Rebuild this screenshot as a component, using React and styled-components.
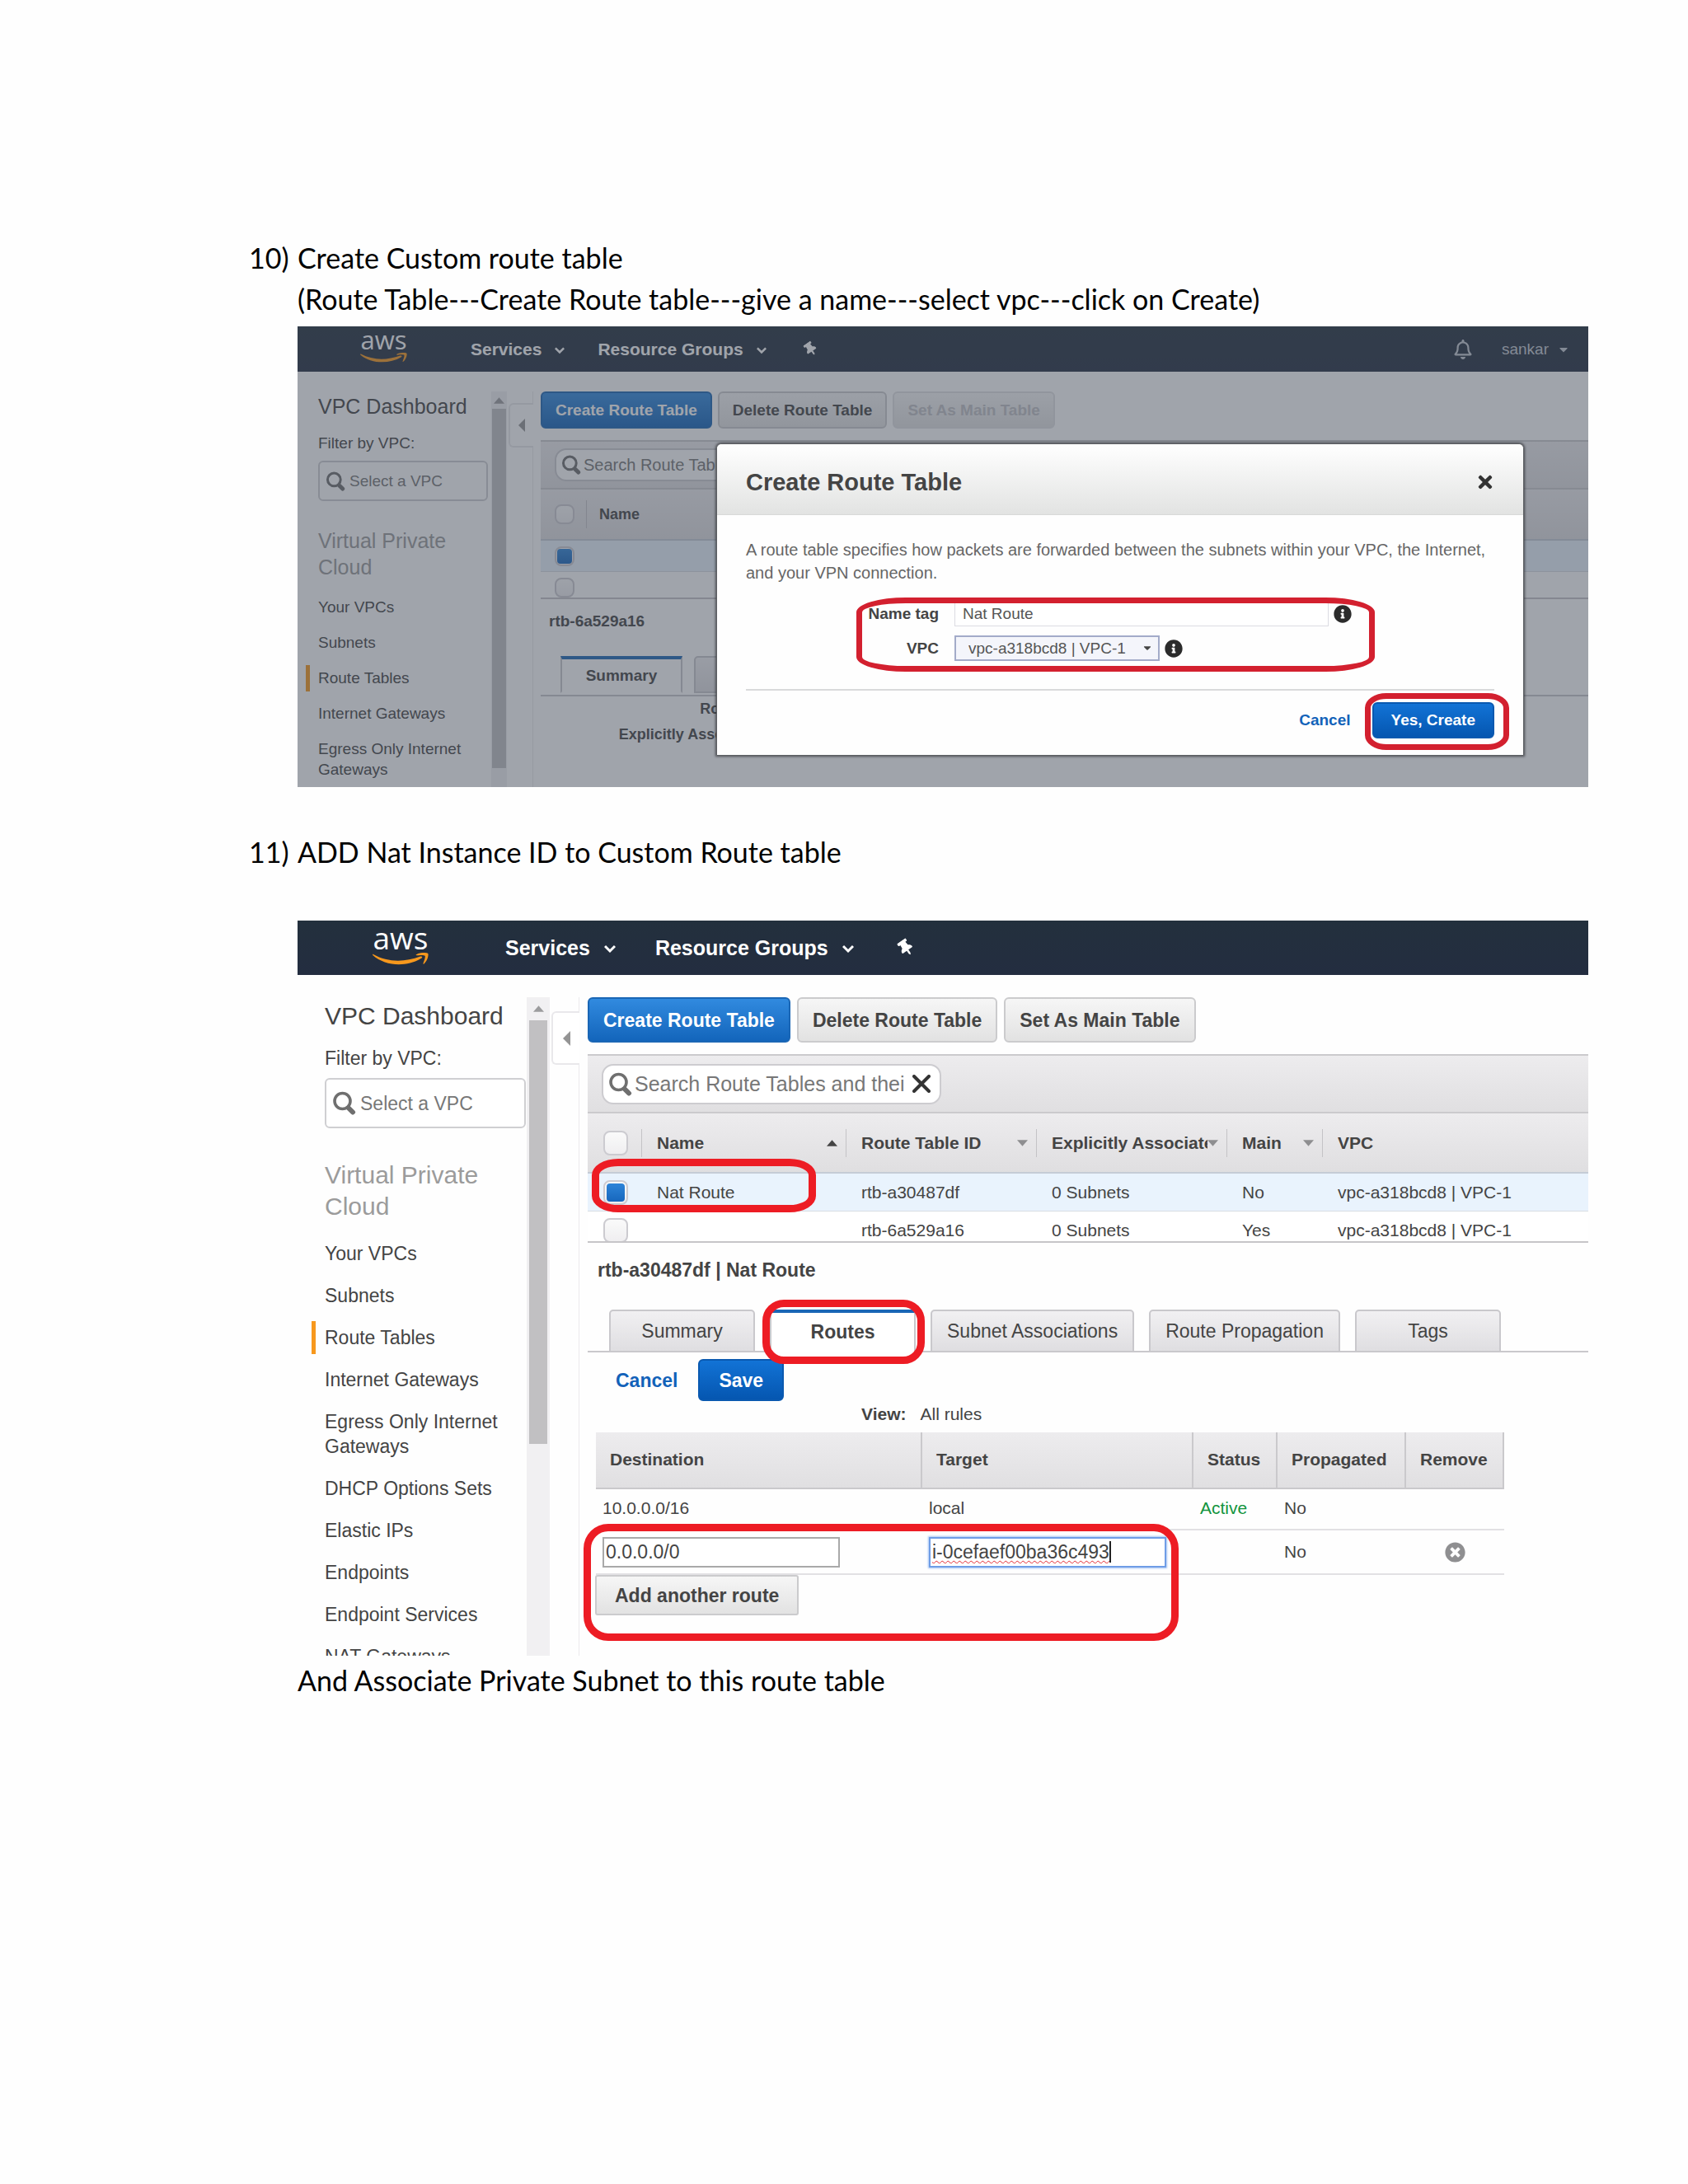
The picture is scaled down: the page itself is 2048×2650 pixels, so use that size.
import React from "react";
import styled, { createGlobalStyle, ThemeProvider, css } from "styled-components";
import { FaInfoCircle, FaThumbtack, FaTimesCircle, FaRegBell, FaTimes, FaCaretDown } from "react-icons/fa";

const GlobalStyle = createGlobalStyle`
  * { box-sizing: border-box; }
  body { margin: 0; background: #fefefe; }
  button, input, select { font: inherit; color: inherit; margin: 0; }
  a { color: inherit; text-decoration: none; }
`;

const large = {
  nav: 66, navFont: 25, navGap: 48, chevronGap: 17, chevron: 14, pinGap: 54, pin: 20,
  logoLeft: 91, logo: 68, logoFont: 37, logoLine: 28, logoGap: 93, swoosh: 15,
  body: 826, bodyPad: 27, side: 278, sidePad: 33, sideTop: 6,
  title: 30, titleLine: 34, text: 23, textLine: 30, small: 21,
  filterGap: 19, boxGap: 9, boxHeight: 61, boxRight: 1, headGap: 38, headLine: 38,
  linksGap: 23, linkGap: 21, markLeft: -16, mark: 5, markHeight: 40,
  bar: 28, barButton: 28, thumb: 514, thumbInset: 3,
  gutter: 46, tabTop: 17, tabHeight: 65, gutterLine: 34,
  button: 55, buttonPad: 17, buttonGap: 8, panelGap: 14, panel: 72, panelPad: 17,
  search: 49, searchWidth: 412, searchFont: 25, searchIcon: 29,
  th: 73, row: 46, tableHeight: 157, cellPad: 18, check: 30, checkDot: 22, checkPad: 19, checkCol: 66,
  nameCol: 248, detailPad: 12, detail: 66, tab: 50, tabWidth: 177, tabGap: 18, tabLeft: 26,
};

const compact = {
  nav: 55, navFont: 21, navGap: 40, chevronGap: 16, chevron: 12, pinGap: 44, pin: 17,
  logoLeft: 76, logo: 57, logoFont: 31, logoLine: 23, logoGap: 77, swoosh: 12,
  body: 504, bodyPad: 24, side: 235, sidePad: 25, sideTop: 3,
  title: 25, titleLine: 30, text: 19, textLine: 25, small: 18,
  filterGap: 17, boxGap: 9, boxHeight: 49, boxRight: 4, headGap: 32, headLine: 32,
  linksGap: 20, linkGap: 18, markLeft: -15, mark: 5, markHeight: 32,
  bar: 19, barButton: 21, thumb: 436, thumbInset: 1,
  gutter: 41, tabTop: 14, tabHeight: 54, gutterLine: 30,
  button: 45, buttonPad: 16, buttonGap: 7, panelGap: 14, panel: 60, panelPad: 17,
  search: 40, searchWidth: 346, searchFont: 20, searchIcon: 24,
  th: 62, row: 38, tableHeight: 133, cellPad: 15, check: 24, checkDot: 18, checkPad: 17, checkCol: 56,
  nameCol: 206, detailPad: 10, detail: 54, tab: 43, tabWidth: 148, tabGap: 14, tabLeft: 24,
};

const px = (key) => ({ theme }) => `${theme[key]}px`;

const Page = styled.main`
  min-height: 100vh;
  padding: 288px 121px 120px 302px;
  font-family: Lato, "Liberation Sans", sans-serif;
  font-size: 34px;
  line-height: 50px;
  color: #000;
`;
const Step = styled.section`
  display: grid;
  grid-template-columns: 59px minmax(0, 1fr);
  margin-bottom: ${(p) => p.$after || 0}px;
`;
const Text = styled.p`
  margin: 0;
  white-space: nowrap;
`;
const Shot = styled.div`
  position: relative;
  margin-top: ${(p) => p.$gap}px;
  margin-bottom: 5px;
  font-family: "Liberation Sans", Arial, sans-serif;
  color: #444;
`;

/* navigation bar */
const Nav = styled.header`
  display: flex;
  align-items: center;
  height: ${px("nav")};
  padding-left: ${px("logoLeft")};
  padding-right: 22px;
  background: linear-gradient(#23303d, #232d40);
  color: #fff;
  font-size: ${px("navFont")};
  line-height: 30px;
  font-weight: bold;
`;
const Logo = styled.a`
  display: flex;
  flex-direction: column;
  align-items: center;
  gap: 4px;
  width: ${px("logo")};
  margin-right: ${px("logoGap")};
  padding-bottom: 6px;
  font: 500 ${px("logoFont")} / ${px("logoLine")} "Open Sans", sans-serif;
  svg { width: 100%; height: ${px("swoosh")}; }
`;
const NavButton = styled.button`
  display: flex;
  align-items: center;
  gap: ${px("chevronGap")};
  margin-right: ${px("navGap")};
  padding: 0;
  border: 0;
  background: none;
  font-weight: bold;
  svg { width: ${px("chevron")}; height: ${px("chevron")}; }
`;
const IconButton = styled.button`
  display: flex;
  padding: 0;
  border: 0;
  background: none;
  margin-left: ${(p) => p.$left || 0}px;
  color: ${(p) => p.$color || "inherit"};
  svg { width: ${(p) => p.$size}px; height: ${(p) => p.$size}px; }
`;
const Pin = styled(FaThumbtack)`
  transform: rotate(-35deg);
`;
const Account = styled.div`
  display: flex;
  align-items: center;
  margin-left: auto;
  gap: 35px;
`;
const UserButton = styled.button`
  display: flex;
  align-items: center;
  gap: 10px;
  padding: 0;
  border: 0;
  background: none;
  font-size: 19px;
  font-weight: normal;
  color: #c5cad2;
`;

/* console frame */
const Body = styled.div`
  display: flex;
  height: ${px("body")};
  padding-top: ${px("bodyPad")};
  overflow: hidden;
  background: #fefefe;
  font-size: ${px("text")};
  line-height: ${px("textLine")};
`;
const Sidebar = styled.aside`
  flex: none;
  width: ${px("side")};
  padding: ${px("sideTop")} ${px("boxRight")} 0 ${px("sidePad")};
`;
const SideTitle = styled.h2`
  margin: 0;
  font-size: ${px("title")};
  line-height: ${px("titleLine")};
  font-weight: normal;
`;
const FilterLabel = styled.label`
  display: block;
  margin-top: ${px("filterGap")};
`;
const SideSearch = styled.div`
  display: flex;
  align-items: center;
  gap: 5px;
  height: ${px("boxHeight")};
  margin-top: ${px("boxGap")};
  padding-left: 7px;
  border: 2px solid #cfcfd2;
  border-radius: 6px;
  background: #fff;
`;
const BareInput = styled.input`
  flex: 1;
  min-width: 0;
  padding: 0;
  border: 0;
  outline: 0;
  background: none;
  &::placeholder { color: #777; opacity: 1; }
`;
const SideHeading = styled.h3`
  margin: ${px("headGap")} 0 0;
  max-width: ${(p) => p.theme.title * 7}px;
  font-size: ${px("title")};
  line-height: ${px("headLine")};
  font-weight: normal;
  color: #9b9b9b;
`;
const Links = styled.nav`
  display: flex;
  flex-direction: column;
  gap: ${px("linkGap")};
  margin-top: ${px("linksGap")};
`;
const SideLink = styled.a`
  position: relative;
  ${(p) => p["aria-current"] && css`
    &::before {
      content: "";
      position: absolute;
      left: ${px("markLeft")};
      top: 50%;
      width: ${px("mark")};
      height: ${px("markHeight")};
      transform: translateY(-50%);
      background: #f7981d;
    }
  `}
`;
const ScrollTrack = styled.div`
  flex: none;
  display: flex;
  flex-direction: column;
  width: ${px("bar")};
  background: #f1f0f2;
`;
const ScrollArrow = styled.button`
  display: flex;
  align-items: center;
  justify-content: center;
  height: ${px("barButton")};
  padding: 0;
  border: 0;
  background: none;
`;
const ScrollThumb = styled.div`
  height: ${px("thumb")};
  margin: 0 ${px("thumbInset")};
  background: #c1c0c2;
`;
const Gutter = styled.div`
  flex: none;
  display: flex;
  flex-direction: column;
  width: ${px("gutter")};
  padding-left: 2px;
`;
const GutterLine = styled.div`
  width: ${px("gutterLine")};
  height: ${(p) => (p.$fill ? "auto" : `${p.theme.tabTop}px`)};
  flex: ${(p) => (p.$fill ? 1 : "none")};
  border-right: 1px solid #ebeaed;
`;
const Collapse = styled.button`
  display: flex;
  align-items: center;
  justify-content: center;
  flex: none;
  width: ${px("gutterLine")};
  height: ${px("tabHeight")};
  padding: 0;
  border: 2px solid #e9e8eb;
  border-right: 0;
  border-radius: 6px 0 0 6px;
  background: #fff;
`;
const Main = styled.div`
  position: relative;
  flex: 1;
  min-width: 0;
`;

/* buttons */
const Button = styled.button`
  height: ${(p) => p.$height || p.theme.button}px;
  padding: 0 ${(p) => p.$pad || p.theme.buttonPad}px;
  border: 2px solid #cbcbcd;
  border-radius: ${(p) => p.$radius || 6}px;
  background: linear-gradient(#f6f6f6, #e2e2e2);
  color: #444;
  font-weight: bold;
  white-space: nowrap;
  ${(p) => p.$primary && css`
    border-color: #1a66b5;
    background: linear-gradient(#318adf, #1365bb);
    color: #fff;
  `}
  ${(p) => p.$deep && css`
    border-color: #0a59b0;
    background: linear-gradient(#1273d6, #0556b0);
    color: #fff;
  `}
  &:disabled { color: #c0c0c4; border-color: #e0e0e2; }
`;
const LinkButton = styled.button`
  padding: 0;
  border: 0;
  background: none;
  font-weight: bold;
  color: #1262b9;
`;
const Toolbar = styled.div`
  display: flex;
  gap: ${px("buttonGap")};
`;

/* list of route tables */
const SearchPanel = styled.div`
  display: flex;
  align-items: center;
  height: ${px("panel")};
  margin-top: ${px("panelGap")};
  padding-left: ${px("panelPad")};
  border-top: 2px solid #cbcacd;
  border-bottom: 2px solid #cbcacd;
  background: linear-gradient(#edecee, #e0dfe1);
`;
const SearchField = styled.div`
  display: flex;
  align-items: center;
  gap: 3px;
  width: ${px("searchWidth")};
  height: ${px("search")};
  padding: 0 11px 0 6px;
  border: 2px solid #cdccd0;
  border-radius: 14px;
  background: #fff;
  font-size: ${px("searchFont")};
`;
const TableWindow = styled.div`
  height: ${px("tableHeight")};
  overflow: hidden;
  border-bottom: 2px solid #c6c5c8;
`;
const RouteTables = styled.table`
  width: 100%;
  table-layout: fixed;
  border-collapse: separate;
  border-spacing: 0;
  font-size: ${px("small")};
  thead { background: linear-gradient(#edecee, #dfdee0); }
  th { height: ${px("th")}; padding: 0; text-align: left; border-bottom: 2px solid #c5ccd6; }
  td { height: ${px("row")}; padding: 0 0 0 ${px("cellPad")}; border-bottom: 1px solid #d8dde3; white-space: nowrap; }
  td:first-child { padding: 0 0 0 ${px("checkPad")}; }
`;
const Col = styled.col`
  width: ${(p) => (p.$w ? `${p.$w}px` : "auto")};
`;
const Row = styled.tr`
  background: ${(p) => (p.$selected ? "#e9f3fd" : "#fff")};
`;
const HeadCell = styled.div`
  display: flex;
  align-items: center;
  height: 34px;
  padding-left: ${(p) => (p.$check ? p.theme.checkPad : p.theme.cellPad)}px;
  padding-right: 10px;
  border-right: ${(p) => (p.$last ? 0 : "1px solid #c4c3c6")};
  svg { flex: none; margin-left: auto; }
`;
const HeadText = styled.span`
  overflow: hidden;
  white-space: nowrap;
`;
const Checkbox = styled.input`
  appearance: none;
  display: block;
  width: ${px("check")};
  height: ${px("check")};
  border: 2px solid #cccbd0;
  border-radius: 8px;
  background: linear-gradient(#fafafa, #efeef0);
  &:checked::before {
    content: "";
    display: block;
    width: ${px("checkDot")};
    height: ${px("checkDot")};
    margin: ${(p) => (p.theme.check - 4 - p.theme.checkDot) / 2}px;
    border-radius: 4px;
    background: linear-gradient(#2d84d8, #1767bd);
  }
`;

/* details */
const DetailTitle = styled.h3`
  margin: 0;
  padding-left: ${px("detailPad")};
  font-size: ${px("text")};
  line-height: ${px("detail")};
`;
const Tabs = styled.div`
  display: flex;
  gap: ${px("tabGap")};
  margin-top: 15px;
  padding-left: ${px("tabLeft")};
  border-bottom: 2px solid #c9c8cc;
`;
const TabSlot = styled.div`
  position: relative;
  margin-bottom: -2px;
`;
const Tab = styled.button`
  min-width: ${px("tabWidth")};
  height: ${(p) => p.theme.tab + 2}px;
  padding: 0 18px;
  border: 2px solid #c9c8cc;
  border-radius: 5px 5px 0 0;
  background: linear-gradient(#f1f0f2, #dfdee1);
  white-space: nowrap;
  ${(p) => p["aria-selected"] && css`
    border-top: 4px solid #1a66b5;
    border-bottom-color: #fff;
    border-radius: 0;
    background: #fff;
    font-weight: bold;
  `}
`;
const Actions = styled.div`
  display: flex;
  gap: 25px;
  align-items: center;
  padding: 8px 0 0 34px;
`;
const View = styled.dl`
  display: flex;
  gap: 17px;
  margin: 0;
  padding: 1px 0 7px 332px;
  font-size: 21px;
  dt { font-weight: bold; }
  dd { margin: 0; }
`;
const Routes = styled.table`
  width: 1102px;
  max-width: 100%;
  margin-left: 10px;
  table-layout: fixed;
  border-collapse: separate;
  border-spacing: 0;
  font-size: 21px;
  thead { background: linear-gradient(#edecee, #e0dfe1); }
  th { height: 69px; padding: 0 0 2px 17px; text-align: left; border-right: 2px solid #cac9cc; border-bottom: 2px solid #cac9cc; }
  td { height: 54px; padding: 0 0 0 8px; border-bottom: 2px solid #e2e1e4; }
  tbody tr:first-child td { height: 50px; padding-bottom: 2px; }
  td:last-child { padding: 0; }
  td:last-child button { margin: 0 auto; }
`;
const Active = styled.span`
  color: #12943d;
`;
const RouteField = styled.div`
  position: relative;
  width: 288px;
`;
const RouteInput = styled.input`
  display: block;
  width: 100%;
  height: 37px;
  padding: 0 2px;
  border: 2px solid #a9a9a9;
  outline: 0;
  background: #fff;
  font-size: 23px;
  line-height: 33px;
  ${(p) => p.$active && css`
    border-color: #6f9de6;
    box-shadow: 0 0 2px 1px #a9c6f5;
    text-decoration-line: underline;
    text-decoration-style: wavy;
    text-decoration-color: #e5232b;
    text-decoration-thickness: 1px;
    text-underline-offset: 2px;
    text-decoration-skip-ink: none;
  `}
`;
const Caret = styled.i`
  position: absolute;
  left: 219px;
  top: 5px;
  width: 2px;
  height: 26px;
  background: #222;
`;
const AddRoute = styled.div`
  padding-left: 9px;
`;
const Facts = styled.dl`
  width: 324px;
  margin: 0;
  text-align: right;
  font-size: 18px;
  line-height: 31px;
  font-weight: bold;
  dt { white-space: nowrap; }
`;

/* hand-drawn style highlight around a group of controls */
const Ring = styled.div`
  position: absolute;
  left: ${(p) => p.$x}px;
  top: ${(p) => p.$y}px;
  width: ${(p) => p.$w}px;
  height: ${(p) => p.$h}px;
  border: ${(p) => p.$line || 9}px solid ${(p) => p.$color || "#ed1c24"};
  border-radius: ${(p) => p.$round || "24px"};
  pointer-events: none;
`;

/* dialog */
const Shade = styled.div`
  position: absolute;
  inset: 0;
  background: rgba(65, 73, 87, 0.5);
`;
const Dialog = styled.div`
  position: absolute;
  top: 142px;
  left: 508px;
  right: 78px;
  border: 1px solid #5d6064;
  border-radius: 6px 6px 0 0;
  background: #fefefe;
  box-shadow: 0 0 3px 1px rgba(40, 42, 46, 0.7);
  font-size: 19px;
  line-height: 28px;
`;
const DialogHead = styled.div`
  display: flex;
  align-items: center;
  justify-content: space-between;
  height: 86px;
  padding: 6px 34px 0 35px;
  border-bottom: 1px solid #d8d9d8;
  border-radius: 6px 6px 0 0;
  background: linear-gradient(#fff, #e2e3e2);
  h2 { margin: 0; font-size: 29px; line-height: 34px; }
`;
const DialogBody = styled.div`
  padding: 28px 35px 20px 35px;
  p { margin: 0; color: #666; font-size: 20px; white-space: nowrap; }
`;
const Form = styled.form`
  position: relative;
  display: grid;
  grid-template-columns: 234px minmax(0, 1fr);
  column-gap: 19px;
  row-gap: 11px;
  margin-top: 20px;
  padding-bottom: 34px;
  border-bottom: 2px solid #d9dadb;
`;
const FormLabel = styled.label`
  text-align: right;
  font-weight: bold;
  line-height: 31px;
`;
const FormCell = styled.div`
  display: flex;
  align-items: center;
  gap: 6px;
`;
const TextInput = styled.input`
  width: 454px;
  height: 31px;
  padding: 0 9px;
  border: 1px solid #dcdce2;
  outline: 0;
  color: #555;
`;
const SelectBox = styled.div`
  position: relative;
  svg { position: absolute; right: 8px; top: 8px; pointer-events: none; }
`;
const Select = styled.select`
  appearance: none;
  width: 249px;
  height: 31px;
  padding: 0 15px;
  border: 2px solid #a3abc9;
  border-radius: 0;
  background: #f4f5fb;
  color: #555;
`;
const DialogFoot = styled.div`
  display: flex;
  align-items: center;
  justify-content: flex-end;
  gap: 26px;
  padding-top: 14px;
`;
const ButtonSlot = styled.div`
  position: relative;
`;

const Magnifier = ({ size }) => (
  <svg width={size} height={size} viewBox="0 0 29 29" fill="none" stroke="#6f6f6f" strokeLinecap="round">
    <circle cx="12.5" cy="12" r="9.5" strokeWidth="3.6" />
    <path d="M20 20.5L25 25.5" strokeWidth="6" />
  </svg>
);
const Swoosh = () => (
  <svg viewBox="0 0 68 15" preserveAspectRatio="none" fill="#f7981d">
    <path d="M1 2C18 11.500 38 12 58 4.500C60 4 61 5.500 59.500 6.600C42 17.500 16 17 0.300 3C-.2 2 .3 1.600 1 2Z" />
    <path d="M53 2.200C58 -.8 66 -.4 67.300 1C68.400 3.500 66 10.500 62.500 13.500C61.500 14 61.200 13.500 61.600 12.600C63 9 64.300 5 63.600 3.800C62.500 2.600 58 2.900 54 3.300C52.500 3.400 52.300 2.800 53 2.200Z" />
  </svg>
);
const Chevron = () => (
  <svg viewBox="0 0 14 14" fill="none" stroke="currentColor" strokeWidth="3">
    <path d="M1 5L7 11L13 5" />
  </svg>
);
const shapes = { up: "M0 8L7 0L14 8Z", down: "M0 0H14L7 8Z" };
const Triangle = ({ dir, color }) => (
  <svg width="13" height="8" viewBox="0 0 14 8" fill={color}><path d={shapes[dir]} /></svg>
);
const LeftTriangle = ({ h }) => (
  <svg width={h / 2} height={h} viewBox="0 0 10 20" preserveAspectRatio="none" fill="#949494"><path d="M10 0V20L0 10Z" /></svg>
);

const sideLinks = [
  "Your VPCs", "Subnets", "Route Tables", "Internet Gateways", "Egress Only Internet Gateways",
  "DHCP Options Sets", "Elastic IPs", "Endpoints", "Endpoint Services", "NAT Gateways",
];

function Console({ theme, id, user, links, columns, rows, disabledMain, children, ring }) {
  return (
    <ThemeProvider theme={theme}>
      <Nav>
        <Logo href="#" aria-label="aws"><span>aws</span><Swoosh /></Logo>
        <NavButton>Services <Chevron /></NavButton>
        <NavButton>Resource Groups <Chevron /></NavButton>
        <IconButton aria-label="Pin" $size={theme.pin} $left={5}><Pin /></IconButton>
        {user && (
          <Account>
            <IconButton aria-label="Notifications" $size={24} $color="#c5cad2"><FaRegBell /></IconButton>
            <UserButton>{user} <FaCaretDown size={16} /></UserButton>
          </Account>
        )}
      </Nav>
      <Body>
        <Sidebar>
          <SideTitle>VPC Dashboard</SideTitle>
          <FilterLabel htmlFor={`${id}-vpc`}>Filter by VPC:</FilterLabel>
          <SideSearch>
            <Magnifier size={theme.searchIcon} />
            <BareInput id={`${id}-vpc`} placeholder="Select a VPC" />
          </SideSearch>
          <SideHeading>Virtual Private Cloud</SideHeading>
          <Links>
            {links.map((name) => (
              <SideLink key={name} href="#" aria-current={name === "Route Tables" ? "page" : undefined}>{name}</SideLink>
            ))}
          </Links>
        </Sidebar>
        <ScrollTrack>
          <ScrollArrow aria-label="Scroll up"><Triangle dir="up" color="#9c9c9e" /></ScrollArrow>
          <ScrollThumb />
        </ScrollTrack>
        <Gutter>
          <GutterLine />
          <Collapse aria-label="Collapse sidebar"><LeftTriangle h={theme.chevron + 4} /></Collapse>
          <GutterLine $fill />
        </Gutter>
        <Main>
          <Toolbar>
            <Button $primary>Create Route Table</Button>
            <Button>Delete Route Table</Button>
            <Button disabled={disabledMain}>Set As Main Table</Button>
          </Toolbar>
          <SearchPanel>
            <SearchField>
              <Magnifier size={theme.searchIcon} />
              <BareInput aria-label="Search Route Tables" placeholder="Search Route Tables and thei" />
              <IconButton aria-label="Clear" $size={22} $color="#333">
                <svg viewBox="0 0 22 22" stroke="currentColor" strokeWidth="4" strokeLinecap="round"><path d="M2 2L20 20M20 2L2 20" /></svg>
              </IconButton>
            </SearchField>
          </SearchPanel>
          <TableWindow>
            <RouteTables>
              <colgroup>
                <Col $w={theme.checkCol} />
                {columns.map((c) => <Col key={c.name} $w={c.w} />)}
              </colgroup>
              <thead>
                <tr>
                  <th><HeadCell $check><Checkbox type="checkbox" aria-label="Select all" /></HeadCell></th>
                  {columns.map((c) => (
                    <th key={c.name}>
                      <HeadCell $last={!c.sort}>
                        <HeadText>{c.name}</HeadText>
                        {c.sort && <Triangle dir={c.sort} color={c.sort === "up" ? "#444" : "#8e8e90"} />}
                      </HeadCell>
                    </th>
                  ))}
                </tr>
              </thead>
              <tbody>
                {rows.map((r, i) => (
                  <Row key={i} $selected={i === 0}>
                    <td><Checkbox type="checkbox" aria-label={`Select row ${i + 1}`} defaultChecked={i === 0} /></td>
                    {r.map((cell, j) => <td key={j}>{cell}</td>)}
                  </Row>
                ))}
              </tbody>
            </RouteTables>
          </TableWindow>
          {ring}
          {children}
        </Main>
      </Body>
    </ThemeProvider>
  );
}

const wideColumns = [
  { name: "Name", w: 248, sort: "up" },
  { name: "Route Table ID", w: 231, sort: "down" },
  { name: "Explicitly Associated", w: 231, sort: "down" },
  { name: "Main", w: 116, sort: "down" },
  { name: "VPC" },
];

export default function App() {
  return (
    <>
      <GlobalStyle />
      <Page>
        <Step $after={49}>
          <Text>10)</Text>
          <div>
            <Text>Create Custom route table</Text>
            <Text>(Route Table---Create Route table---give a name---select vpc---click on Create)</Text>
            <Shot $gap={8}>
              <Console theme={compact} id="first" user="sankar" disabledMain links={sideLinks.slice(0, 5)} columns={[{ name: "Name" }]} rows={[[""], [""]]}>
                <DetailTitle>rtb-6a529a16</DetailTitle>
                <Tabs role="tablist">
                  <TabSlot><Tab role="tab" aria-selected>Summary</Tab></TabSlot>
                  <TabSlot><Tab role="tab" aria-label="Routes" /></TabSlot>
                </Tabs>
                <Facts>
                  <dt>Route Table ID:</dt>
                  <dt>Explicitly Associated With:</dt>
                </Facts>
              </Console>
              <Shade />
              <Dialog role="dialog" aria-labelledby="dialog-title">
                <DialogHead>
                  <h2 id="dialog-title">Create Route Table</h2>
                  <IconButton aria-label="Close" $size={24} $color="#333"><FaTimes /></IconButton>
                </DialogHead>
                <DialogBody>
                  <p>
                    A route table specifies how packets are forwarded between the subnets within your VPC, the Internet,
                    <br />and your VPN connection.
                  </p>
                  <Form>
                    <FormLabel htmlFor="tag">Name tag</FormLabel>
                    <FormCell>
                      <TextInput id="tag" defaultValue="Nat Route" />
                      <IconButton type="button" aria-label="Name tag help" $size={22} $color="#2b2b2b"><FaInfoCircle /></IconButton>
                    </FormCell>
                    <FormLabel htmlFor="vpc">VPC</FormLabel>
                    <FormCell>
                      <SelectBox>
                        <Select id="vpc"><option>vpc-a318bcd8 | VPC-1</option></Select>
                        <FaCaretDown size={14} />
                      </SelectBox>
                      <IconButton type="button" aria-label="VPC help" $size={22} $color="#2b2b2b"><FaInfoCircle /></IconButton>
                    </FormCell>
                    <Ring $x={134} $y={-4} $w={629} $h={90} $line={7} $color="#d3202f" $round="60px / 18px" />
                  </Form>
                  <DialogFoot>
                    <LinkButton>Cancel</LinkButton>
                    <ButtonSlot>
                      <Button $deep $height={44} $pad={21}>Yes, Create</Button>
                      <Ring $x={-9} $y={-11} $w={175} $h={69} $line={7} $color="#d3202f" $round="26px / 18px" />
                    </ButtonSlot>
                  </DialogFoot>
                </DialogBody>
              </Dialog>
            </Shot>
          </div>
        </Step>

        <Step>
          <Text>11)</Text>
          <div>
            <Text>ADD Nat Instance ID to Custom Route table</Text>
            <Shot $gap={58}>
              <Console
                theme={large}
                id="second"
                links={sideLinks}
                columns={wideColumns}
                rows={[
                  ["Nat Route", "rtb-a30487df", "0 Subnets", "No", "vpc-a318bcd8 | VPC-1"],
                  ["", "rtb-6a529a16", "0 Subnets", "Yes", "vpc-a318bcd8 | VPC-1"],
                ]}
                ring={<Ring $x={5} $y={196} $w={272} $h={65} $round="32px / 20px" />}
              >
                <DetailTitle>rtb-a30487df | Nat Route</DetailTitle>
                <Tabs role="tablist">
                  <TabSlot><Tab role="tab">Summary</Tab></TabSlot>
                  <TabSlot>
                    <Tab role="tab" aria-selected>Routes</Tab>
                    <Ring $x={-9} $y={-12} $w={197} $h={78} $round="26px" />
                  </TabSlot>
                  <TabSlot><Tab role="tab">Subnet Associations</Tab></TabSlot>
                  <TabSlot><Tab role="tab">Route Propagation</Tab></TabSlot>
                  <TabSlot><Tab role="tab">Tags</Tab></TabSlot>
                </Tabs>
                <Actions>
                  <LinkButton>Cancel</LinkButton>
                  <Button $deep $height={51} $pad={23}>Save</Button>
                </Actions>
                <View><dt>View:</dt><dd>All rules</dd></View>
                <Routes>
                  <colgroup>
                    <Col $w={396} /><Col $w={329} /><Col $w={102} /><Col $w={156} /><Col $w={119} />
                  </colgroup>
                  <thead>
                    <tr><th>Destination</th><th>Target</th><th>Status</th><th>Propagated</th><th>Remove</th></tr>
                  </thead>
                  <tbody>
                    <tr><td>10.0.0.0/16</td><td>local</td><td><Active>Active</Active></td><td>No</td><td /></tr>
                    <tr>
                      <td><RouteField><RouteInput aria-label="Destination" defaultValue="0.0.0.0/0" /></RouteField></td>
                      <td>
                        <RouteField>
                          <RouteInput $active aria-label="Target" spellCheck={false} defaultValue="i-0cefaef00ba36c493" />
                          <Caret />
                        </RouteField>
                      </td>
                      <td />
                      <td>No</td>
                      <td><IconButton aria-label="Remove route" $size={25} $color="#8f8f91"><FaTimesCircle /></IconButton></td>
                    </tr>
                  </tbody>
                </Routes>
                <AddRoute><Button $height={49} $pad={22} $radius={3}>Add another route</Button></AddRoute>
                <Ring $x={-5} $y={639} $w={722} $h={142} $round="30px" />
              </Console>
            </Shot>
            <Text>And Associate Private Subnet to this route table</Text>
          </div>
        </Step>
      </Page>
    </>
  );
}
